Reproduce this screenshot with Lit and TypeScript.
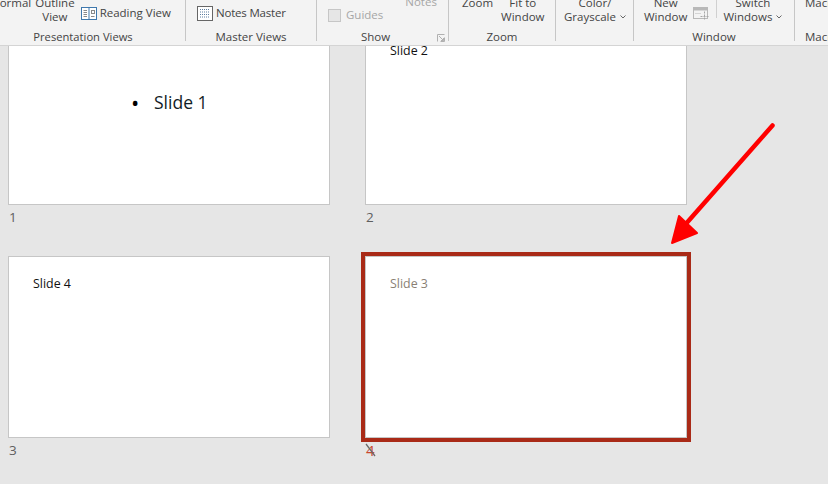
import { LitElement, html, css } from "lit";
import { customElement } from "lit/decorators.js";

@customElement("app-root")
export class AppRoot extends LitElement {
  static styles = css`
    :host { display: block; position: relative; width: 828px; height: 484px; overflow: hidden; background: #e6e6e6;
      font-family: "Open Sans", "Noto Sans", sans-serif; }
    .ribbon { display: flex; height: 45px; overflow: hidden; background: #f3f3f3; border-bottom: 1px solid #d4d4d4;
      font-size: 11.5px; color: #444; }
    .sep { flex: none; width: 1px; height: 41px; background: #c6c6c6; }
    .group { flex: none; height: 45px; display: flex; flex-direction: column; justify-content: flex-end; }
    .body { flex: none; height: 28px; margin-bottom: 5px; display: flex; align-items: flex-start; white-space: nowrap; line-height: 14px; }
    .label { flex: none; height: 16px; line-height: 16px; text-align: center; white-space: nowrap; }
    .big { text-align: center; display: flex; flex-direction: column; align-items: center; }
    .row { display: flex; align-items: center; gap: 3px; margin-top: 9px; height: 16px; }
    .g1 { width: 204px; margin-left: -19px; }
    .g1 .body { padding-left: 10px; gap: 4px; }
    .g1 .label { font-size: 11.2px; }
    .g1 .row { margin-left: 2px; }
    .g2 { width: 130px; }
    .g2 .body { padding-left: 11px; }
    .g2 .row { letter-spacing: -0.2px; }
    .g3 { width: 131px; position: relative; }
    .g3 .body { padding-left: 11px; color: #a6a6a6; }
    .g3 .row { margin-top: 11px; gap: 5px; }
    .g3 .notes { margin: -1px 0 0 22px; }
    .g3 .label { padding-right: 14px; }
    .launcher { position: absolute; left: 120px; top: 34px; }
    .g4 { width: 106px; }
    .g4 .body { padding-left: 13px; gap: 8px; }
    .g5 { width: 77px; }
    .g5 .body { padding-left: 8px; }
    .g5 .label { visibility: hidden; }
    .g6 { width: 160px; }
    .g6 .body { padding-left: 10px; }
    .nw-icon { margin: 11px 0 0 6px; flex: none; }
    .mini-sep { width: 1px; height: 18px; margin: 4px 6px 0 6px; background: #d0d0d0; flex: none; }
    .g7 { width: 60px; }
    .g7 .body, .g7 .label { padding-left: 10px; text-align: left; }
    .chev { display: inline-block; margin-left: 4px; vertical-align: 2px; }
    main { height: 438px; overflow: hidden; }
    .grid { display: grid; grid-template-columns: 322px 322px; column-gap: 35px; padding-left: 8px; margin-top: -23px; }
    .cell { height: 233px; }
    .slide { box-sizing: border-box; height: 182px; background: #fff; border: 1px solid #c6c6c6; position: relative;
      font-size: 12.4px; color: #111; padding: 18px 0 0 24px; line-height: 18px; }
    .slide.title { font-size: 17.5px; padding: 66px 0 0 145px; line-height: 24px; color: #111c26; }
    .bullet { position: absolute; left: 122px; top: 66px; font-size: 22px; color: #000; }
    .slide.faded { color: #8a7f74; }
    .num { font-size: 13.5px; color: #5f5f5f; padding: 3px 0 0 1px; line-height: 18px; position: relative; }
    .num.struck { color: #c8472e; padding-left: 1px; font-size: 15px; }
    .strike { position: absolute; left: 0; top: 5px; }
    .hl { position: absolute; inset: -5px; border: 4px solid #a92a17; pointer-events: none; }
    .arrow { position: absolute; left: 0; top: 0; pointer-events: none; }
  `;

  private chev() {
    return html`<svg class="chev" width="6" height="4" viewBox="0 0 6 4"><path d="M.5.5 3 3 5.500.5" fill="none" stroke="#666" stroke-width="1"/></svg>`;
  }

  render() {
    return html`
      <div class="ribbon">
        <div class="group g1">
          <div class="body">
            <div class="big"><span>Normal</span></div>
            <div class="big"><span>Outline</span><span>View</span></div>
            <div class="row">
              <svg width="16" height="15" viewBox="0 0 16 15">
                <rect x=".5" y="1.500" width="15" height="12" fill="#fff" stroke="#3f78ad"/>
                <path d="M8 1.500v12" stroke="#3f78ad"/>
                <path d="M2.500 4.500h3.500M2.500 6.500h3.500M2.500 8.500h3.500M2.500 10.500h3.500" stroke="#8a8a8a"/>
                <rect x="10.500" y="4.500" width="3" height="3" fill="none" stroke="#8a8a8a"/>
                <path d="M10 10.500h3.500" stroke="#8a8a8a"/>
              </svg>
              <span>Reading View</span>
            </div>
          </div>
          <div class="label">Presentation Views</div>
        </div>
        <div class="sep"></div>
        <div class="group g2">
          <div class="body">
            <div class="row">
              <svg width="16" height="15" viewBox="0 0 16 15">
                <rect x=".5" y=".5" width="15" height="14" fill="#fff" stroke="#666"/>
                <path d="M3 3.500h10M3 6h10M3 8.500h10M3 11h10" stroke="#5d7d9f" stroke-dasharray="1 1"/>
              </svg>
              <span>Notes Master</span>
            </div>
          </div>
          <div class="label">Master Views</div>
        </div>
        <div class="sep"></div>
        <div class="group g3">
          <div class="body">
            <div class="row">
              <svg width="13" height="13" viewBox="0 0 13 13"><rect x=".5" y=".5" width="12" height="12" fill="#e6e6e6" stroke="#c6c6c6"/></svg>
              <span>Guides</span>
            </div>
            <div class="notes">Notes</div>
          </div>
          <div class="label">Show</div>
          <svg class="launcher" width="8" height="8" viewBox="0 0 8 8">
            <path d="M.5 7.500v-7h7M3.500 7.500h4v-4M2 2l4.500 4.500M6.500 4v2.500H4" fill="none" stroke="#b0b0b0"/>
          </svg>
        </div>
        <div class="sep"></div>
        <div class="group g4">
          <div class="body">
            <div class="big"><span>Zoom</span></div>
            <div class="big"><span>Fit to</span><span>Window</span></div>
          </div>
          <div class="label">Zoom</div>
        </div>
        <div class="sep"></div>
        <div class="group g5">
          <div class="body">
            <div class="big"><span>Color/</span><span>Grayscale${this.chev()}</span></div>
          </div>
          <div class="label">Color</div>
        </div>
        <div class="sep"></div>
        <div class="group g6">
          <div class="body">
            <div class="big"><span>New</span><span>Window</span></div>
            <svg class="nw-icon" width="17" height="15" viewBox="0 0 17 15">
              <rect x=".5" y=".5" width="14" height="11" fill="#f3f3f3" stroke="#b8b8b8"/>
              <path d="M1 2h13" stroke="#b8b8b8" stroke-width="3"/>
              <path d="M2.500 6.500h6" stroke="#b4b4b4" stroke-dasharray="1 1"/>
              <path d="M11.500 4.500v9M7.500 9.500h9" stroke="#a6a6a6" stroke-dasharray="2 1"/>
            </svg>
            <div class="mini-sep"></div>
            <div class="big"><span>Switch</span><span>Windows${this.chev()}</span></div>
          </div>
          <div class="label">Window</div>
        </div>
        <div class="sep"></div>
        <div class="group g7">
          <div class="body"><span>Macros</span></div>
          <div class="label">Macros</div>
        </div>
      </div>
      <main>
        <div class="grid">
          <div class="cell">
            <div class="slide title"><span class="bullet">•</span>Slide 1</div>
            <div class="num">1</div>
          </div>
          <div class="cell">
            <div class="slide">Slide 2</div>
            <div class="num">2</div>
          </div>
          <div class="cell">
            <div class="slide">Slide 4</div>
            <div class="num">3</div>
          </div>
          <div class="cell">
            <div class="slide faded">Slide 3<div class="hl"></div></div>
            <div class="num struck">4
              <svg class="strike" width="12" height="15" viewBox="0 0 12 15"><path d="M1 1l9 12" stroke="#6a6a6a" stroke-width="1.300"/></svg>
            </div>
          </div>
        </div>
      </main>
      <svg class="arrow" width="828" height="484" viewBox="0 0 828 484">
        <path d="M772.500 125.500 684 226" stroke="#ff0000" stroke-width="4.500" stroke-linecap="round" fill="none"/>
        <path d="M672 243 679 216 697 233Z" fill="#ff0000" stroke="#ff0000" stroke-width="2" stroke-linejoin="round"/>
      </svg>
    `;
  }
}
